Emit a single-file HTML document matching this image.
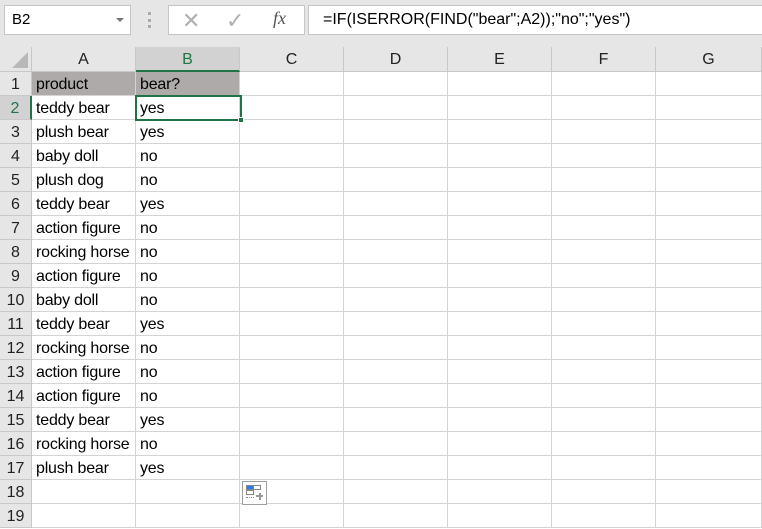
<!DOCTYPE html><html><head><style>
*{margin:0;padding:0;box-sizing:border-box}
body{width:762px;height:529px;overflow:hidden;background:#fff;font-family:"Liberation Sans",sans-serif;position:relative;color:#000}
.abs{position:absolute}
.top{left:0;top:0;width:762px;height:47px;background:#e6e6e6}
.box{background:#fff;border:1px solid #c6c6c6;height:30px;top:5px}
.ch{top:47px;height:25px;background:#e6e6e6;border-right:1px solid #c8c8c8;border-bottom:1px solid #c8c8c8;text-align:center;font-size:16px;line-height:25px;color:#222}
.rh{left:0;width:32px;height:24px;background:#e6e6e6;border-right:1px solid #c8c8c8;border-bottom:1px solid #c8c8c8;text-align:center;font-size:16px;line-height:25px;color:#222}
.c{height:24px;border-right:1px solid #d4d4d4;border-bottom:1px solid #d4d4d4;font-size:16px;line-height:26px;padding-left:4px;white-space:nowrap;overflow:visible;letter-spacing:-0.2px}
</style></head><body>
<div class="abs top"></div>
<div class="abs box" style="left:4px;width:127px;font-size:15px;line-height:28px;padding-left:7px">B2<span style="position:absolute;right:6px;top:12px;border-left:4px solid transparent;border-right:4px solid transparent;border-top:4px solid #777"></span></div>
<div class="abs" style="left:148px;top:12px;width:3px;height:16px;border-left:3px dotted #aaa"></div>
<div class="abs box" style="left:168px;width:137px"></div>
<div class="abs" style="left:182px;top:8px;font-size:22px;color:#b0b0b0">✕</div>
<div class="abs" style="left:226px;top:8px;font-size:22px;color:#b0b0b0">✓</div>
<div class="abs" style="left:273px;top:8px;font-size:18px;font-style:italic;font-family:'Liberation Serif',serif;color:#555">fx</div>
<div class="abs box" style="left:308px;width:460px;font-size:16px;line-height:28px;padding-left:14px">=IF(ISERROR(FIND("bear";A2));"no";"yes")</div>

<div class="abs ch" style="left:0;width:32px"><span style="position:absolute;right:3px;bottom:3px;border-left:16px solid transparent;border-bottom:16px solid #b8b8b8"></span></div>
<div class="abs ch" style="left:32px;width:104px">A</div>
<div class="abs ch" style="left:136px;width:104px;background:#d2d2d2;border-bottom:2px solid #217346;color:#217346">B</div>
<div class="abs ch" style="left:240px;width:104px">C</div>
<div class="abs ch" style="left:344px;width:104px">D</div>
<div class="abs ch" style="left:448px;width:104px">E</div>
<div class="abs ch" style="left:552px;width:104px">F</div>
<div class="abs ch" style="left:656px;width:106px">G</div>

<div id="g"></div>
<script>
var d=[["product","bear?"],["teddy bear","yes"],["plush bear","yes"],["baby doll","no"],["plush dog","no"],["teddy bear","yes"],["action figure","no"],["rocking horse","no"],["action figure","no"],["baby doll","no"],["teddy bear","yes"],["rocking horse","no"],["action figure","no"],["action figure","no"],["teddy bear","yes"],["rocking horse","no"],["plush bear","yes"],["",""],["",""]];
var h="";
for(var r=0;r<19;r++){var y=72+24*r;
var rs=r==1?"background:#d2d2d2;border-right:2px solid #217346;color:#217346;":"";
h+='<div class="abs rh" style="top:'+y+'px;'+rs+'">'+(r+1)+'</div>';
for(var c=0;c<7;c++){var x=32+104*c;var bg=r==0&&c<2?"background:#aeaaaa;":"";
var t=c<2?d[r][c]:"";
h+='<div class="abs c" style="left:'+x+'px;top:'+y+'px;width:'+(c==6?106:104)+'px;'+bg+'">'+t+'</div>';}}
document.getElementById("g").innerHTML=h;
</script>
<div class="abs" style="left:135px;top:95px;width:107px;height:26px;border:2px solid #217346"></div>
<div class="abs" style="left:238px;top:117px;width:6px;height:6px;background:#217346;border:1px solid #fff"></div>
<div class="abs" style="left:242px;top:481px;width:25px;height:24px;border:1px solid #a0a0a0;background:#fff">
<div class="abs" style="left:3px;top:3px;width:8px;height:5px;background:#2b7cf0;border:1px solid #888"></div>
<div class="abs" style="left:10px;top:3px;width:8px;height:5px;border:1px solid #888"></div>
<div class="abs" style="left:3px;top:8px;width:8px;height:5px;border:1px solid #888"></div>
<div class="abs" style="left:3px;top:15px;width:8px;height:1px;border-top:1px dotted #888"></div>
<div class="abs" style="left:13px;top:13px;width:7px;height:2px;background:#999"></div>
<div class="abs" style="left:15.5px;top:10.5px;width:2px;height:7px;background:#999"></div>
</div>
</body></html>
